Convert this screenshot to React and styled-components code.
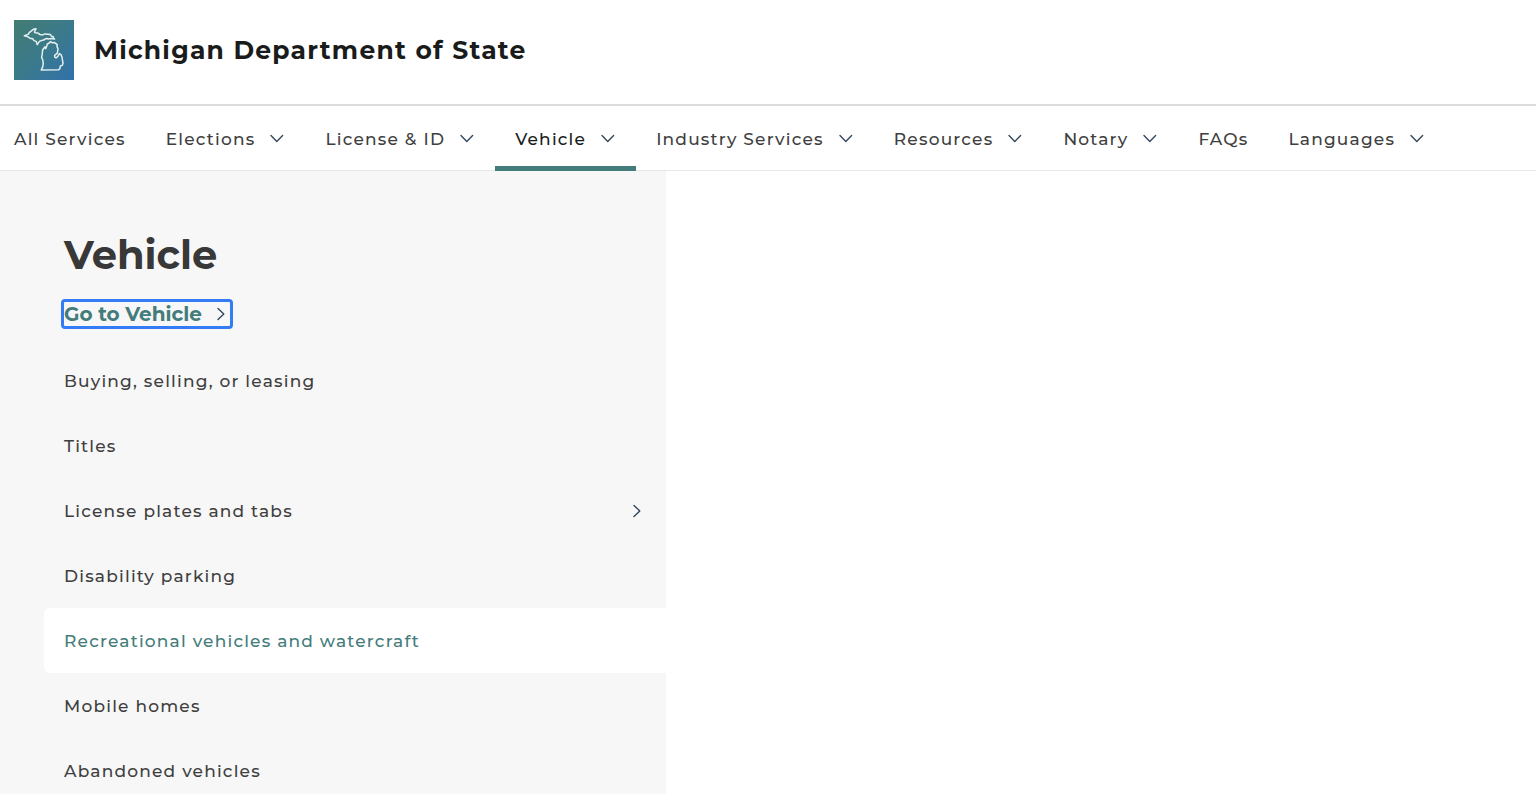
import React from 'react';
import styled, { createGlobalStyle } from 'styled-components';

const GlobalStyle = createGlobalStyle`
  * { box-sizing: border-box; }
  body {
    margin: 0;
    background: #ffffff;
    color: #3c3c3c;
    font-family: Montserrat, Inter, "Open Sans", sans-serif;
  }
`;

const Page = styled.div`
  display: flex;
  flex-direction: column;
  height: 100vh;
  overflow: hidden;
`;

const Header = styled.header`
  display: flex;
  flex-shrink: 0;
  align-items: center;
  gap: 20px;
  padding: 20px 14px 24px;
  border-bottom: 2px solid #dcdcdc;
`;

const LogoSvg = styled.svg`
  display: block;
  width: 60px;
  height: 60px;
`;

const SiteName = styled.a`
  color: #191c1a;
  font-size: 25px;
  font-weight: 700;
  line-height: 32px;
  letter-spacing: 0.05em;
  text-decoration: none;
`;

const Nav = styled.nav`
  flex-shrink: 0;
  border-bottom: 1px solid #e8e8e8;
`;

const NavList = styled.ul`
  display: flex;
  margin: 0 0 -1px;
  padding: 0;
  list-style: none;
`;

const navItem = `
  display: flex;
  align-items: center;
  gap: 14px;
  height: 65px;
  border: 0;
  background: none;
  font-family: inherit;
  font-size: 17px;
  font-weight: 500;
  line-height: 24px;
  letter-spacing: 0.07em;
  white-space: nowrap;
  text-decoration: none;
  cursor: pointer;
`;

const NavLink = styled.a`
  ${navItem}
  padding: 0 20px 0 ${(p) => (p.$first ? '14px' : '20px')};
  color: #3f3f3f;
`;

const NavButton = styled.button`
  ${navItem}
  padding: 0 20px;
  color: ${(p) => (p.$active ? '#191c1a' : '#3f3f3f')};
  box-shadow: ${(p) => (p.$active ? 'inset 0 -5px 0 #437c7a' : 'none')};
`;

const Icon = styled.svg`
  display: block;
  flex-shrink: 0;
  width: 16px;
  height: 16px;
  fill: none;
  stroke: #33475b;
  stroke-width: 1.4;
  stroke-linecap: round;
  stroke-linejoin: round;
`;

const Panel = styled.section`
  flex: 1;
  width: 43.36%;
  padding-top: 60px;
  background: #f7f7f7;
`;

const PanelHeading = styled.div`
  display: flex;
  flex-direction: column;
  align-items: flex-start;
  gap: 23px;
  padding: 0 20px 22px 64px;
`;

const Title = styled.h1`
  margin: 0;
  color: #383838;
  font-size: 40px;
  font-weight: 700;
  line-height: 48px;
`;

const SectionLink = styled.a`
  display: flex;
  align-items: center;
  gap: 12px;
  color: #437c7a;
  font-size: 20px;
  font-weight: 700;
  line-height: 24px;
  text-decoration: none;
  outline: 3px solid #347cf6;
  border-radius: 1px;
`;

const Menu = styled.ul`
  margin: 0;
  padding: 0 0 0 44px;
  list-style: none;
`;

const MenuLink = styled.a`
  display: flex;
  align-items: center;
  justify-content: space-between;
  height: 65px;
  padding: 0 20px;
  border-radius: 6px 0 0 6px;
  background: ${(p) => (p.$active ? '#ffffff' : 'transparent')};
  color: ${(p) => (p.$active ? '#437c7a' : '#3f3f3f')};
  font-size: 17px;
  font-weight: 500;
  line-height: 24px;
  letter-spacing: 0.07em;
  text-decoration: none;
`;

const ChevronDown = () => (
  <Icon viewBox="0 0 16 16" aria-hidden="true">
    <path d="M2 4.6l5.8 5.8 5.8-5.8" />
  </Icon>
);

const ChevronRight = () => (
  <Icon viewBox="0 0 16 16" aria-hidden="true">
    <path d="M4 2.4l5.8 5.6-5.8 5.6" />
  </Icon>
);

const Logo = () => (
  <LogoSvg viewBox="0 0 60 60" role="img" aria-label="State of Michigan">
    <defs>
      <linearGradient id="logoFill" x1="0" y1="0" x2="1" y2="1">
        <stop offset="0" stopColor="#437c72" />
        <stop offset="0.5" stopColor="#3b7a8b" />
        <stop offset="1" stopColor="#3171ab" />
      </linearGradient>
    </defs>
    <rect width="60" height="60" fill="url(#logoFill)" />
    <g fill="none" stroke="#e4f0f0" strokeWidth="1.5" strokeLinejoin="round">
      <path d="M10.3 15.7L14.2 14.4 15.2 12.6 17.4 10.9 19.6 9.2 22 8.8 20.4 12 21.4 12.8 24 13.1 26 14.6 28.4 14.9 31 13.9 33.6 14.2 36.4 14.6 37.4 16.2 39 16.4 39.6 18.3 40.6 19.1 37.2 18.6 34 19 32.6 18.4 29.6 20 26.4 20.9 25.2 21.6 23.2 24.6 22.2 21.4 20 20.6 18.8 18.8 15.8 18.2 13.6 16.6z" />
      <path d="M36.6 21.6L38.4 22.8 40.6 22.6 43.2 24.6 43 26.6 44 28.6 43.6 31.6 43.2 33.2 40.6 35.4 40.8 37.2 42 38 44 36.2 45.4 33.6 47 34.6 48 37 48.4 39.8 49 43.2 48.2 45.4 46.4 46 45.8 48.6 44.6 49.8 27.2 50 28.8 46.6 29.2 43.4 28.8 40 27.6 37.2 28.2 34.4 28.6 30 31 26.8 31.8 28.6 32.8 26 33.2 24.2 35.2 23z" />
    </g>
  </LogoSvg>
);

const navItems = [
  { label: 'All Services', link: true },
  { label: 'Elections' },
  { label: 'License & ID' },
  { label: 'Vehicle' },
  { label: 'Industry Services' },
  { label: 'Resources' },
  { label: 'Notary' },
  { label: 'FAQs', link: true },
  { label: 'Languages' },
];

const menuItems = [
  { label: 'Buying, selling, or leasing' },
  { label: 'Titles' },
  { label: 'License plates and tabs', nested: true },
  { label: 'Disability parking' },
  { label: 'Recreational vehicles and watercraft', active: true },
  { label: 'Mobile homes' },
  { label: 'Abandoned vehicles' },
];

export default function App() {
  return (
    <>
      <GlobalStyle />
      <Page>
        <Header>
          <Logo />
          <SiteName href="#">Michigan Department of State</SiteName>
        </Header>
        <Nav aria-label="Main">
          <NavList>
            {navItems.map(({ label, link }, index) => (
              <li key={label}>
                {link ? (
                  <NavLink href="#" $first={index === 0}>{label}</NavLink>
                ) : (
                  <NavButton type="button" $active={label === 'Vehicle'} aria-expanded={label === 'Vehicle'}>
                    {label}
                    <ChevronDown />
                  </NavButton>
                )}
              </li>
            ))}
          </NavList>
        </Nav>
        <Panel>
          <PanelHeading>
            <Title>Vehicle</Title>
            <SectionLink href="#">
              Go to Vehicle
              <ChevronRight />
            </SectionLink>
          </PanelHeading>
          <Menu>
            {menuItems.map(({ label, nested, active }) => (
              <li key={label}>
                <MenuLink href="#" $active={active}>
                  {label}
                  {nested && <ChevronRight />}
                </MenuLink>
              </li>
            ))}
          </Menu>
        </Panel>
      </Page>
    </>
  );
}
